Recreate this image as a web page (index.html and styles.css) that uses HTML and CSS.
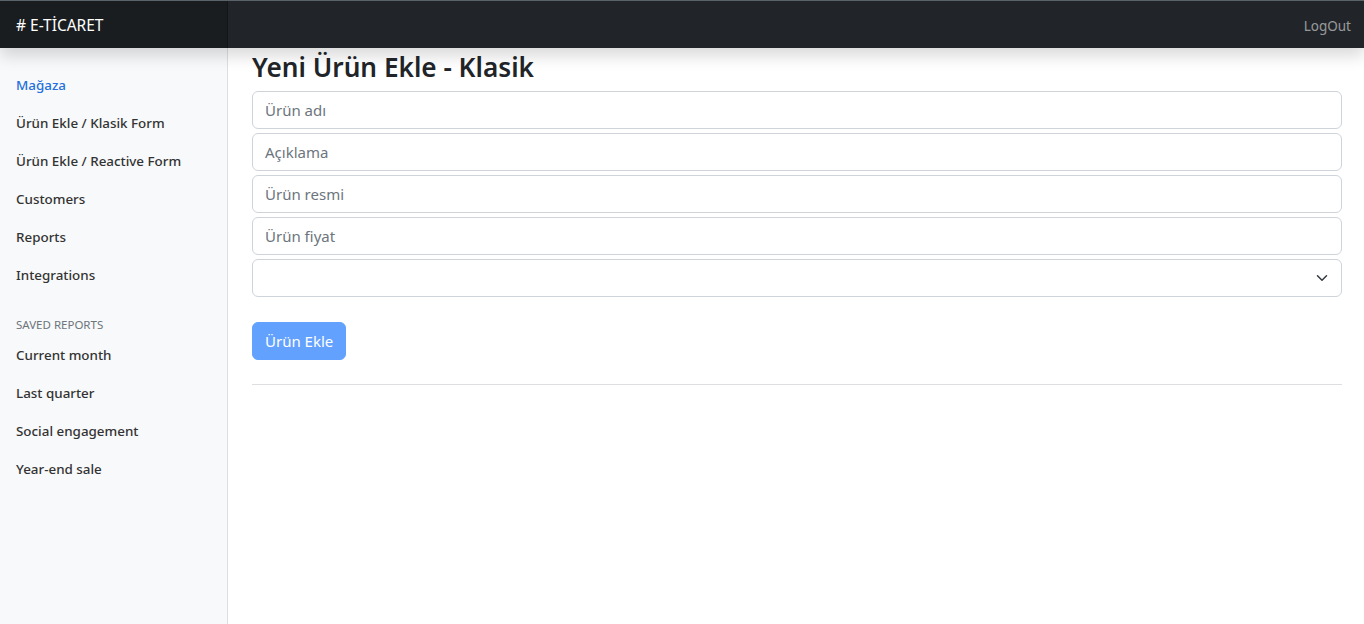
FILE: index.html
```html
<!DOCTYPE html>
<html lang="tr">
<head>
<meta charset="utf-8">
<title>E-Ticaret</title>
<link rel="stylesheet" href="styles.css">
</head>
<body>
<header class="topbar">
  <a class="brand" href="#"># E-TİCARET</a>
  <nav class="top-nav"><a class="top-link" href="#">LogOut</a></nav>
</header>
<div class="layout">
  <aside class="sidebar">
    <ul class="side-list">
      <li><a class="side-link active" href="#">Mağaza</a></li>
      <li><a class="side-link" href="#">Ürün Ekle / Klasik Form</a></li>
      <li><a class="side-link" href="#">Ürün Ekle / Reactive Form</a></li>
      <li><a class="side-link" href="#">Customers</a></li>
      <li><a class="side-link" href="#">Reports</a></li>
      <li><a class="side-link" href="#">Integrations</a></li>
    </ul>
    <h6 class="side-heading">Saved reports</h6>
    <ul class="side-list">
      <li><a class="side-link" href="#">Current month</a></li>
      <li><a class="side-link" href="#">Last quarter</a></li>
      <li><a class="side-link" href="#">Social engagement</a></li>
      <li><a class="side-link" href="#">Year-end sale</a></li>
    </ul>
  </aside>
  <main class="main">
    <h3 class="page-title">Yeni Ürün Ekle - Klasik</h3>
    <form class="product-form">
      <input class="field" type="text" placeholder="Ürün adı">
      <input class="field" type="text" placeholder="Açıklama">
      <input class="field" type="text" placeholder="Ürün resmi">
      <input class="field" type="text" placeholder="Ürün fiyat">
      <div class="select-wrap">
        <select class="field select"><option></option></select>
        <svg class="chevron" viewBox="0 0 16 16" width="16" height="12" aria-hidden="true"><path d="m2 5 6 6 6-6" fill="none" stroke="#343a40" stroke-width="2" stroke-linecap="round" stroke-linejoin="round"/></svg>
      </div>
      <div class="actions"><button class="btn" type="button" disabled>Ürün Ekle</button></div>
    </form>
    <hr class="divider">
  </main>
</div>
</body>
</html>
```
FILE: styles.css
```css
* { box-sizing: border-box; }
html, body { margin: 0; padding: 0; }
body {
  font-family: "Noto Sans", "Open Sans", Arial, sans-serif;
  font-size: 16px;
  line-height: 1.5;
  color: #212529;
  background: #fff;
}
a { text-decoration: none; }

.topbar {
  position: sticky;
  top: 0;
  z-index: 10;
  height: 48px;
  display: flex;
  align-items: stretch;
  background: #212529;
  border-top: 1px solid #5b636a;
  box-shadow: 0 8px 16px rgba(0,0,0,.15);
}
.brand {
  width: 228px;
  flex: none;
  display: flex;
  align-items: center;
  padding: 2px 16px 0;
  background: #1a1d20;
  box-shadow: inset -1px 0 0 rgba(0,0,0,.25);
  color: #fff;
  font-size: 15.5px;
}
.top-nav {
  flex: 1;
  display: flex;
  justify-content: flex-end;
  align-items: center;
  padding-right: 13px;
}
.top-link {
  color: rgba(255,255,255,.55);
  font-size: 13.5px;
  padding-top: 3px;
}

.layout {
  display: flex;
  min-height: calc(100vh - 48px);
}
.sidebar {
  width: 228px;
  flex: none;
  background: #f8f9fa;
  box-shadow: inset -1px 0 0 rgba(0,0,0,.1);
  padding-top: 18px;
}
.side-list {
  list-style: none;
  margin: 0;
  padding: 0;
}
.side-link {
  display: block;
  padding: 0 16px;
  height: 38px;
  line-height: 38px;
  font-size: 13.4px;
  font-weight: 500;
  color: #333;
  white-space: nowrap;
}
.side-link.active { color: #2470dc; }
.side-heading {
  margin: 24px 0 4px;
  padding: 0 16px;
  height: 14px;
  line-height: 14px;
  font-size: 11.5px;
  font-weight: 400;
  text-transform: uppercase;
  color: #6c757d;
}

.main {
  flex: 1;
  min-width: 0;
  padding: 4px 22px 0 24px;
}
.page-title {
  margin: 0 0 8px;
  font-size: 26.2px;
  font-weight: 600;
  line-height: 31px;
  color: #212529;
}
.product-form {
  display: flex;
  flex-direction: column;
  gap: 4px;
}
.field {
  display: block;
  width: 100%;
  height: 38px;
  padding: 6px 12px;
  font-family: inherit;
  font-size: 15px;
  line-height: 24px;
  color: #212529;
  background: #fff;
  border: 1px solid #ced4da;
  border-radius: 6px;
  outline: none;
}
.field::placeholder { color: #6c757d; opacity: 1; }
.select-wrap { position: relative; }
.select {
  appearance: none;
  -webkit-appearance: none;
  padding-right: 36px;
}
.chevron {
  position: absolute;
  right: 12px;
  top: 13px;
  pointer-events: none;
}
.actions {
  margin-top: 21px;
}
.btn {
  height: 38px;
  padding: 0 12px;
  font-family: inherit;
  font-size: 15px;
  line-height: 36px;
  color: #fff;
  background: #62a1fe;
  border: 1px solid #62a1fe;
  border-radius: 6px;
}
.divider {
  margin: 24px 0 0;
  border: 0;
  border-top: 1px solid #dcdee1;
}
```
